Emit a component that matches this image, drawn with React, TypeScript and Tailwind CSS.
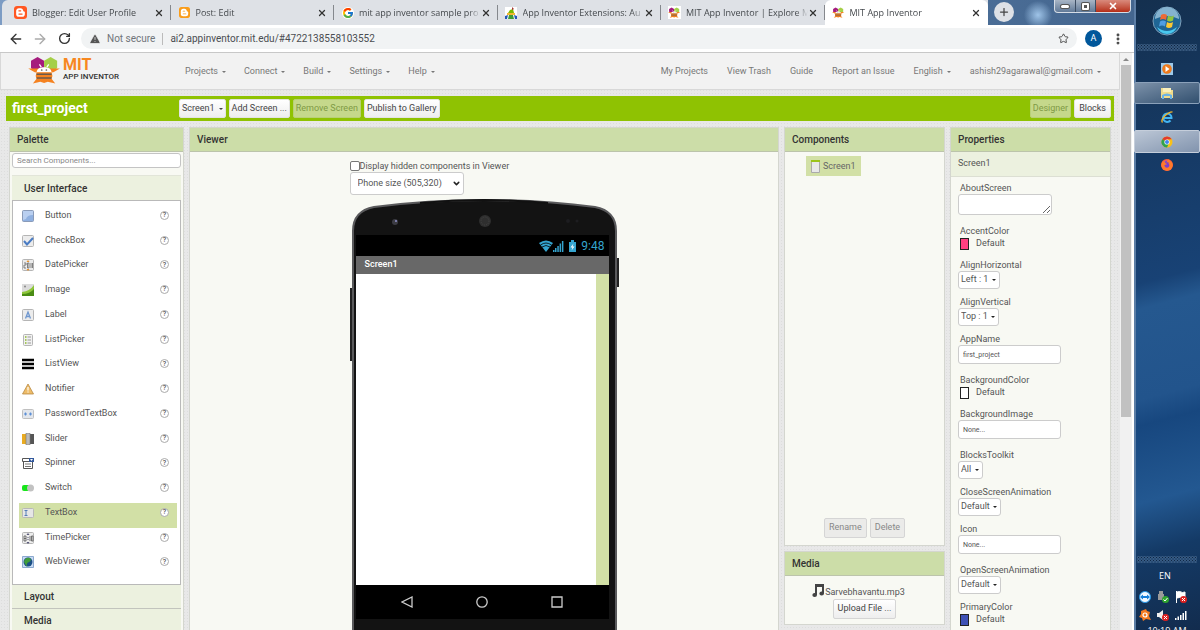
import type { ReactNode } from "react";
import { ArrowLeft, ArrowRight, ChevronDown, EllipsisVertical, Plus, RotateCw, Star, TriangleAlert, X } from "lucide-react";
import { FaFirefoxBrowser } from "react-icons/fa";
import { FcGoogle } from "react-icons/fc";
import { SiBlogger } from "react-icons/si";

function Bee({ className }: { className?: string }) {
  return (
    <svg viewBox="0 0 36 30" className={className} aria-hidden="true">
      <path d="M3 5 10 1l7 4v8l-7 4-7-4z" fill="#a51c7d" />
      <path d="M17 5l7-4 7 4v8l-7 4-7-4z" fill="#a5cf47" />
      <path d="M0 13.500h11l2 2h8l2-2h11l-7 4-9 1H15l-8-1z" fill="#f58220" />
      <path d="M9 18c0-5 4-6 8-6s8 1 8 6z" fill="#fff" />
      <path d="M14 12l-2-3M20 12l2-3" stroke="#fff" strokeWidth="1.4" />
      <circle cx="14.500" cy="15" r="0.900" fill="#666" />
      <circle cx="19.500" cy="15" r="0.900" fill="#666" />
      <path d="M9 17.500h16l1 4-1 3 4 5-8-2-4 1.500-4-1.500-8 2 4-5-1-3z" fill="#f58220" />
      <path d="M9 19.500h16M9 23.500h16" stroke="#6b5a4c" strokeWidth="1.500" />
    </svg>
  );
}

function ExtensionIcon() {
  return (
    <svg viewBox="0 0 12 12" className="size-3" aria-hidden="true">
      <path fill="#fff" d="M0 0h12v12H0z" />
      <path d="M2 6h8v2H2z" fill="#f2b632" />
      <path d="M3 6l2-3 3-1 1 4z" fill="#7ab800" />
      <path d="M7 0l2 2-2 1z" fill="#a33" />
      <path d="M3 12l1-4h4l1 4z" fill="#3e9c35" />
      <path d="M0 12V9l3-1-1 4zM12 12V9L9 8l1 4z" fill="#2456b8" />
    </svg>
  );
}

const tabs: { title: string; icon: ReactNode }[] = [
  { title: "Blogger: Edit User Profile", icon: <SiBlogger className="size-[13px] rounded-[3px] bg-white text-[#ff5722]" /> },
  { title: "Post: Edit", icon: <SiBlogger className="size-[11px] rounded-[2px] bg-white text-[#f99d1c]" /> },
  { title: "mit app inventor sample pro", icon: <FcGoogle className="size-3 rounded-full bg-white" /> },
  { title: "App Inventor Extensions: Au", icon: <ExtensionIcon /> },
  { title: "MIT App Inventor | Explore M", icon: <Bee className="size-[13px] bg-white" /> },
  { title: "MIT App Inventor", icon: <Bee className="size-[13px]" /> },
];

function TabStrip() {
  return (
    <div className="flex h-[25px] shrink-0 bg-linear-to-r from-[#7d9cc4] via-[#5b7fa8] to-[#44668f] pl-[2px]">
      <div className="grid max-w-[987px] min-w-0 flex-1 grid-cols-6 rounded-tl-md bg-[#dee1e6] pl-[5px]">
        {tabs.map((tab, i) => {
          const active = i === tabs.length - 1;
          return (
            <div
              key={i}
              className={`flex min-w-0 items-center pl-[7px] ${active ? "rounded-t-md bg-white pr-[7px]" : ""}`}
            >
              <span className="flex w-[13px] shrink-0 justify-center">{tab.icon}</span>
              <span className="ml-[5px] min-w-0 flex-1 overflow-hidden mask-r-from-90% text-[9px] whitespace-nowrap text-[#45494d]">
                {tab.title}
              </span>
              <button type="button" aria-label={`Close ${tab.title}`} className="text-[#333]">
                <X className="size-[10px]" strokeWidth={3} />
              </button>
              {!active && <span className="ml-[6px] h-[15px] w-px shrink-0 bg-[#85888d]" />}
            </div>
          );
        })}
      </div>
      <button
        type="button"
        aria-label="New tab"
        className="mt-[2px] ml-[6px] flex size-5 shrink-0 items-center justify-center rounded-full bg-[#dee1e6] text-[#444]"
      >
        <Plus className="size-3" strokeWidth={2.5} />
      </button>
      <div className="ml-auto w-10 bg-[radial-gradient(circle_at_60%_60%,#9fc4e8_0,transparent_50%)]" />
      <div className="mr-[3px] flex h-[13px] shrink-0 overflow-hidden rounded-b-[4px] border border-t-0 border-[#d6dde6] bg-linear-to-b from-[#a9b6c6] to-[#617a98]">
        <button type="button" aria-label="Minimize" className="flex w-[21px] items-center justify-center border-r border-[#3c4d63]">
          <span className="h-[3px] w-2 rounded-sm bg-white ring-1 ring-[#555]" />
        </button>
        <button type="button" aria-label="Restore" className="flex w-5 items-center justify-center border-r border-[#3c4d63]">
          <span className="size-[7px] rounded-[1px] border-2 border-white bg-[#555] ring-1 ring-[#555]" />
        </button>
        <button type="button" aria-label="Close window" className="flex w-[34px] items-center justify-center bg-linear-to-b from-[#d98a7c] to-[#b52b14] text-white">
          <X className="size-[10px]" strokeWidth={4} />
        </button>
      </div>
    </div>
  );
}

function AddressBar() {
  return (
    <div className="flex h-7 shrink-0 items-center border-b border-[#c8c8c8] bg-white pr-[9px] pl-2 font-['Roboto',sans-serif] text-[10px]">
      <button type="button" aria-label="Back" className="text-[#333]">
        <ArrowLeft className="size-4" />
      </button>
      <button type="button" aria-label="Forward" className="ml-2 text-[#aaa]">
        <ArrowRight className="size-4" />
      </button>
      <button type="button" aria-label="Reload" className="ml-[10px] text-[#333]">
        <RotateCw className="size-[13px]" strokeWidth={2.5} />
      </button>
      <div className="ml-[10px] flex h-[21px] flex-1 items-center rounded-full bg-[#f1f3f4] px-2">
        <TriangleAlert className="size-3 fill-[#555] text-[#f1f3f4]" strokeWidth={1.5} />
        <span className="ml-[6px] whitespace-nowrap text-[#70757a]">Not secure</span>
        <span className="mx-[7px] h-3 w-px bg-[#bbb]" />
        <input
          aria-label="Address"
          defaultValue="ai2.appinventor.mit.edu/#4722138558103552"
          className="min-w-0 flex-1 bg-transparent text-[#4a4d51] outline-none"
        />
        <button type="button" aria-label="Bookmark" className="text-[#444]">
          <Star className="size-[11px]" />
        </button>
      </div>
      <span className="ml-2 flex size-[17px] items-center justify-center rounded-full bg-[#01579b] text-[9px] text-white">A</span>
      <button type="button" aria-label="Browser menu" className="ml-[9px] text-[#444]">
        <EllipsisVertical className="size-[14px]" strokeWidth={3} />
      </button>
    </div>
  );
}

function Caret() {
  return <span className="inline-block border-x-2 border-t-2 border-x-transparent border-t-current" aria-hidden="true" />;
}

const menus = ["Projects", "Connect", "Build", "Settings", "Help"];

const accountLinks = [
  { label: "My Projects" },
  { label: "View Trash" },
  { label: "Guide" },
  { label: "Report an Issue" },
  { label: "English", menu: true },
  { label: "ashish29agarawal@gmail.com", menu: true },
];

function SiteHeader() {
  return (
    <header className="flex h-[37px] shrink-0 items-center border border-t-0 border-[#d8d8d8] bg-[#f2f2f2] pr-[18px] pl-[26px] text-[#777]">
      <a href="#home" className="flex w-[158px] items-center pb-[3px]" aria-label="MIT App Inventor">
        <Bee className="h-7 w-9" />
        <span className="flex flex-col">
          <span className="text-[16px] leading-[14px] font-bold text-[#f7871f]">MIT</span>
          <span className="text-[8px] leading-[9px] font-medium whitespace-nowrap text-[#333]">APP INVENTOR</span>
        </span>
      </a>
      <nav className="flex gap-[18px] pt-[2px]" aria-label="Main menu">
        {menus.map((menu) => (
          <button key={menu} type="button" aria-haspopup="menu" className="flex items-center gap-1">
            {menu}
            <Caret />
          </button>
        ))}
      </nav>
      <nav className="ml-auto flex gap-[19px] pt-[2px]" aria-label="Account">
        {accountLinks.map((link) =>
          link.menu ? (
            <button key={link.label} type="button" aria-haspopup="menu" className="flex items-center gap-1">
              {link.label}
              <Caret />
            </button>
          ) : (
            <a key={link.label} href="#account">
              {link.label}
            </a>
          ),
        )}
      </nav>
    </header>
  );
}

function BarButton({ children, disabled }: { children: ReactNode; disabled?: boolean }) {
  return (
    <button
      type="button"
      disabled={disabled}
      className={`flex h-[19px] items-center gap-1 rounded-[2px] border px-[2px] whitespace-nowrap ${
        disabled ? "border-[#b9d077] bg-[#c5d88b] text-[#7f9a45]" : "border-[#e4e4e4] bg-linear-to-b from-white to-[#eee] text-[#444]"
      }`}
    >
      {children}
    </button>
  );
}

function ProjectBar() {
  return (
    <div className="mx-[6px] mt-[6px] flex h-[25px] shrink-0 items-center gap-[3px] bg-[#8fc202] pr-[3px] pl-[6px]">
      <h1 className="w-[164px] text-[14px] font-bold text-white">first_project</h1>
      <BarButton>
        Screen1 <Caret />
      </BarButton>
      <BarButton>Add Screen ...</BarButton>
      <BarButton disabled>Remove Screen</BarButton>
      <BarButton>Publish to Gallery</BarButton>
      <div className="ml-auto flex gap-[3px]">
        <BarButton disabled>Designer</BarButton>
        <BarButton>
          <span className="px-[2px]">Blocks</span>
        </BarButton>
      </div>
    </div>
  );
}

function Panel({ title, className, children }: { title: string; className?: string; children: ReactNode }) {
  return (
    <section className={`flex flex-col border border-[#d4d6cf] bg-[#f8f9f3] ${className ?? ""}`}>
      <h2 className="flex h-6 shrink-0 items-center border-b border-[#bcc4ab] bg-[#ccdda8] px-[7px] text-[10px] font-medium text-[#333]">
        {title}
      </h2>
      {children}
    </section>
  );
}

const plate = <rect x="0.500" y="0.500" width="11" height="11" rx="1" fill="#ececec" stroke="#b5b5b5" />;

const paletteItems: { name: string; art: ReactNode }[] = [
  {
    name: "Button",
    art: (
      <>
        <rect x="0.500" y="0.500" width="11" height="11" rx="1" fill="#8fb0e0" stroke="#8a9bb8" />
        <path d="M1 1h10v4Q5 5 4 9L1 10z" fill="#b9cff0" />
      </>
    ),
  },
  { name: "CheckBox", art: <>{plate}<path d="M2 6l3 3.500L11 3" fill="none" stroke="#4a7cc4" strokeWidth="2" /></> },
  {
    name: "DatePicker",
    art: <>{plate}<path d="M2 4h2v2H2v3h2M5.500 4h1.500v5H5.500zM9 4v5M10.500 4v5" fill="none" stroke="#666" strokeWidth="0.800" /><path d="M4.500 3L6 1l1.500 2zM4.500 10L6 12l1.500-2z" fill="#e8902c" /></>,
  },
  {
    name: "Image",
    art: <><path d="M0 0h12v12H0z" fill="#dcdcdc" /><circle cx="3" cy="2.500" r="1" fill="#888" /><path d="M0 8Q8 7 12 1v11H0z" fill="#8ec63a" /><path d="M0 10q8 0 12-5v7H0z" fill="#4a8c14" /></>,
  },
  { name: "Label", art: <>{plate}<path d="M3.500 9.500L6 3l2.500 6.500M4.500 7.500h3" fill="none" stroke="#6f97cf" strokeWidth="1.300" /></> },
  {
    name: "ListPicker",
    art: <><rect x="1.500" y="0.500" width="9" height="11" rx="1" fill="#f1f1f1" stroke="#b5b5b5" /><path d="M3 3h1.500M3 6h1.500M3 9h1.500" stroke="#8cb92c" strokeWidth="1.500" /><path d="M5.500 3H9M5.500 6H9M5.500 9H9" stroke="#999" /></>,
  },
  { name: "ListView", art: <path d="M0 2h12M0 6h12M0 10h12" stroke="#000" strokeWidth="2.400" /> },
  { name: "Notifier", art: <><path d="M6 1l5.500 10H.5z" fill="#eebc68" stroke="#b98a45" strokeWidth="0.800" /><path d="M6 4v3.500M6 8.500v1" stroke="#fff" strokeWidth="1.200" /></> },
  {
    name: "PasswordTextBox",
    art: <><rect x="0.500" y="1.500" width="11" height="9" rx="1" fill="#e2e6ec" stroke="#c0c0c0" /><path d="M2 6h3M3.500 4.500v3M7 6h3M8.500 4.500v3" stroke="#5c8fd6" strokeWidth="1.200" /></>,
  },
  { name: "Slider", art: <><path d="M0 1h4v10H0z" fill="#e9ab22" /><path d="M8 1h4v10H8z" fill="#555" /><path d="M4 0h4v12H4z" fill="#bbb" stroke="#777" strokeWidth="0.600" /></> },
  {
    name: "Spinner",
    art: <><path d="M.5 1.500h11v3H.5zM1.500 4.500h9v7h-9z" fill="#fff" stroke="#555" /><path d="M7 1h5v4H7z" fill="#31589c" /><path d="M8 2h3L9.500 4z" fill="#fff" /><path d="M3 7h6M3 9.500h6" stroke="#777" /></>,
  },
  { name: "Switch", art: <><rect y="3" width="9" height="6" rx="2" fill="#17e51b" /><circle cx="8.500" cy="6" r="3.500" fill="#c2c2c2" /></> },
  { name: "TextBox", art: <><rect x="0.500" y="1.500" width="11" height="9" rx="1" fill="#e6e6e6" stroke="#b8b8b8" /><path d="M2.500 3.500h3M2.500 8.500h3M4 3.500v5" stroke="#557eb8" /></> },
  {
    name: "TimePicker",
    art: <>{plate}<path d="M2 4h2v5H2zM2 6.500h2M8 4v5M9.500 4h1.500v5H9.500z" fill="none" stroke="#555" strokeWidth="0.800" /><path d="M4.500 3L6 1l1.500 2zM4.500 10L6 12l1.500-2zM5.500 5h1v1h-1zM5.500 7h1v1h-1z" fill="#557" /></>,
  },
  { name: "WebViewer", art: <><path d="M.5.500h11v11H.5z" fill="#c9dcf4" stroke="#8ba8cf" /><circle cx="6" cy="6" r="4.500" fill="#1b4f86" /><path d="M2 6q1-5 6-4 2 3-1 4t-2 4-3-4z" fill="#3f9c3a" /></> },
];

function Palette() {
  return (
    <Panel title="Palette" className="w-[175px] shrink-0">
      <div className="flex flex-col px-[2px] pt-[1px]">
        <input
          type="search"
          aria-label="Search components"
          placeholder="Search Components..."
          className="h-[15px] rounded-[3px] border border-[#c4c4c4] bg-white px-[4px] text-[8px] placeholder:text-[#888]"
        />
        <button type="button" aria-expanded="true" className="mt-[7px] h-[25px] border-t border-[#e2e5d9] bg-[#ecf1df] px-3 text-left text-[10px] font-medium text-[#333]">
          User Interface
        </button>
        <div className="border border-[#b9b9b9] bg-white pt-[5px] pr-[3px] pb-[7px] pl-[6px]">
          <ul className="grid h-[371px] auto-rows-fr">
            {paletteItems.map((item) => (
              <li
                key={item.name}
                className={`flex items-start justify-between pr-2 pl-[3px] ${item.name === "TextBox" ? "bg-[#d2e0a6]" : ""}`}
              >
                <span className="flex items-start gap-[11px]">
                  <svg viewBox="0 0 12 12" className="mt-1 size-3" aria-hidden="true">
                    {item.art}
                  </svg>
                  <span className="pt-[3px] leading-3 text-[#555]">{item.name}</span>
                </span>
                <button
                  type="button"
                  aria-label={`About ${item.name}`}
                  className="mt-[5px] flex size-[9px] items-center justify-center rounded-full border border-[#aaa] bg-white text-[7px] font-medium text-[#555]"
                >
                  ?
                </button>
              </li>
            ))}
          </ul>
        </div>
        {["Layout", "Media"].map((name) => (
          <button key={name} type="button" aria-expanded="false" className="h-6 border-b border-[#c2c4bd] bg-[#ecf1df] px-3 text-left text-[10px] font-medium text-[#333]">
            {name}
          </button>
        ))}
      </div>
    </Panel>
  );
}

function Phone() {
  return (
    <div className="relative mt-1 h-[470px] pt-9 pr-[10px] pl-[6px]">
      <svg viewBox="0 0 269 470" className="absolute inset-0 h-full w-full" aria-hidden="true">
        <path d="M0 89h3v73H0zM266 59h3v29h-3z" fill="#222" />
        <path d="M3 480V32Q3 12 24 8 78 1 134 1t111 7q21 4 21 24v448z" fill="#131313" stroke="#5a5a5c" strokeWidth="2" />
        <path d="M70 4Q102 1 134 1t64 3" fill="none" stroke="#111" strokeWidth="2" />
        <circle cx="45" cy="23" r="3" fill="#3b3b42" />
        <circle cx="46" cy="22" r="1" fill="#8f90c8" />
        <circle cx="135" cy="22" r="6" fill="#2f2f2f" />
        <circle cx="135" cy="22" r="4" fill="none" stroke="#444" strokeDasharray="1 1" />
        <circle cx="218" cy="22" r="2" fill="#1d1d20" />
        <circle cx="227" cy="22" r="1.500" fill="#1d1d20" />
      </svg>
      <div className="relative">
        <div className="flex h-[21px] items-center justify-end gap-[4px] bg-black pr-[4px] text-[12px] text-[#35a4cf]">
          <svg viewBox="0 0 38 12" className="h-3 w-[38px]" fill="currentColor" aria-hidden="true">
            <path d="M0 3Q7-2 14 3L7 12z" />
            <path d="M1.500 5Q7 1 12.500 5M3 7Q7 4 11 7" fill="none" stroke="#000" strokeWidth="0.800" />
            <path d="M14 12v-2h1.500v2zM16 12V8h1.500v4zM18.300 12V6h1.500v6zM20.600 12V3.500h1.500V12zM22.900 12V1h1.500v11z" />
            <path d="M30 2h2V0h3v2h2v10h-7z" />
            <path d="M34.500 3.500L31.500 7.500h2l-1 3 3-4h-2z" fill="#fff" />
          </svg>
          9:48
        </div>
        <div className="flex h-[18px] items-center bg-[#686868] px-[9px] font-medium text-white">Screen1</div>
        <div className="h-[311px] border-r-[13px] border-[#d2e0a6] bg-white" />
        <div className="flex h-[34px] items-center justify-center gap-[63px] bg-black">
          <svg viewBox="0 0 12 12" className="size-3" fill="none" stroke="#ccc" strokeWidth="1.300" aria-hidden="true">
            <path d="M11 1v10L1 6z" />
          </svg>
          <svg viewBox="0 0 12 12" className="size-3" fill="none" stroke="#ccc" strokeWidth="1.300" aria-hidden="true">
            <circle cx="6" cy="6" r="5.200" />
          </svg>
          <svg viewBox="0 0 12 12" className="size-3" fill="none" stroke="#ccc" strokeWidth="1.300" aria-hidden="true">
            <path d="M1 1h10v10H1z" />
          </svg>
        </div>
      </div>
    </div>
  );
}

function Viewer() {
  return (
    <Panel title="Viewer" className="min-w-0 flex-1">
      <div className="mx-auto w-[269px] pt-2">
        <label className="flex h-3 items-center leading-3 text-[#555]">
          <input type="checkbox" className="size-[10px] appearance-none rounded-[2px] border border-[#777] bg-white" />
          Display hidden components in Viewer
        </label>
        <div className="relative w-[114px]">
          <select aria-label="Screen size" className="h-[23px] w-full appearance-none rounded-[3px] border border-[#ccc] bg-white px-[7px] text-[#555]">
            <option>Phone size (505,320)</option>
          </select>
          <ChevronDown className="pointer-events-none absolute top-[7px] right-[3px] size-[9px] text-[#222]" strokeWidth={4} />
        </div>
        <Phone />
      </div>
    </Panel>
  );
}

function SmallButton({ children, disabled }: { children: ReactNode; disabled?: boolean }) {
  return (
    <button
      type="button"
      disabled={disabled}
      className={`h-5 rounded-[2px] border border-[#d5d5d5] px-1 ${disabled ? "bg-[#ebebe9] text-[#888]" : "bg-linear-to-b from-white to-[#eee] text-[#444]"}`}
    >
      {children}
    </button>
  );
}

function SideColumn() {
  return (
    <div className="flex w-[161px] shrink-0 flex-col gap-[5px]">
      <Panel title="Components" className="h-[419px]">
        <div className="flex px-[21px] pt-1">
          <button type="button" className="flex h-5 items-center gap-[3px] bg-[#d2e0a6] px-[5px] text-[#666]">
            <svg viewBox="0 0 9 13" className="h-[13px] w-[9px]" aria-hidden="true">
              <path d="M.5.500h8v12h-8z" fill="#e8e8e8" stroke="#aaa" />
              <path d="M0 0h9v2H0z" fill="#9bc31c" />
            </svg>
            <span className="pt-[2px]">Screen1</span>
          </button>
        </div>
        <div className="mt-auto mb-[7px] flex justify-center gap-[3px]">
          <SmallButton disabled>Rename</SmallButton>
          <SmallButton disabled>Delete</SmallButton>
        </div>
      </Panel>
      <Panel title="Media">
        <div className="flex flex-col items-center pt-[6px] pb-[5px]">
          <a href="#media" className="mb-px flex items-center gap-px pr-3 text-[#555]">
            <svg viewBox="0 0 12 13" className="h-[13px] w-3" fill="#444" aria-hidden="true">
              <path d="M3 0h9v9.500a2.300 2 0 1 1-2-2V3H5v8a2.300 2 0 1 1-2-2z" />
            </svg>
            <span className="pt-1 leading-3">Sarvebhavantu.mp3</span>
          </a>
          <SmallButton>Upload File ...</SmallButton>
        </div>
      </Panel>
    </div>
  );
}

type Property = { name: string; kind: "area" | "color" | "select" | "text"; value: string };

const properties: Property[] = [
  { name: "AboutScreen", kind: "area", value: "" },
  { name: "AccentColor", kind: "color", value: "#ff4081" },
  { name: "AlignHorizontal", kind: "select", value: "Left : 1" },
  { name: "AlignVertical", kind: "select", value: "Top : 1" },
  { name: "AppName", kind: "text", value: "first_project" },
  { name: "BackgroundColor", kind: "color", value: "#ffffff" },
  { name: "BackgroundImage", kind: "text", value: "None..." },
  { name: "BlocksToolkit", kind: "select", value: "All" },
  { name: "CloseScreenAnimation", kind: "select", value: "Default" },
  { name: "Icon", kind: "text", value: "None..." },
  { name: "OpenScreenAnimation", kind: "select", value: "Default" },
  { name: "PrimaryColor", kind: "color", value: "#3f51b5" },
];

function PropertyEditor({ name, kind, value }: Property) {
  if (kind === "area") {
    return <textarea id={name} defaultValue={value} className="mb-[10px] block h-[21px] w-[94px] resize rounded-[3px] border border-[#ccc] bg-white" />;
  }
  if (kind === "color") {
    return (
      <button id={name} type="button" className="mb-2 flex h-[14px] items-center gap-[7px] pl-[2px]">
        <span className="h-3 w-[9px] border border-[#222]" style={{ backgroundColor: value }} />
        Default
      </button>
    );
  }
  if (kind === "select") {
    return (
      <div className="relative mb-[7px] w-fit">
        <select id={name} className="block h-[18px] appearance-none rounded-[3px] border border-[#ccc] bg-white pr-[10px] pl-[2px]">
          <option>{value}</option>
        </select>
        <span className="pointer-events-none absolute top-[8px] right-[4px] flex text-[#222]">
          <Caret />
        </span>
      </div>
    );
  }
  return <input id={name} defaultValue={value} className="mb-[10px] block h-[19px] w-[103px] rounded-[3px] border border-[#ccc] bg-white px-1 text-[7px]" />;
}

function Properties() {
  return (
    <Panel title="Properties" className="w-[161px] shrink-0">
      <div className="flex h-[25px] shrink-0 items-center border-b border-[#dcdfd3] bg-[#ecf1df] px-[7px] text-[#555]">Screen1</div>
      <div className="px-[7px] pt-[5px] pb-2 text-[#555]">
        {properties.map((property) => (
          <div key={property.name}>
            <label htmlFor={property.name} className="block pl-[2px] leading-3">
              {property.name}
            </label>
            <PropertyEditor {...property} />
          </div>
        ))}
      </div>
    </Panel>
  );
}

function Scrollbar() {
  return (
    <div className="flex w-[14px] shrink-0 flex-col items-center border-r-2 border-white bg-[#f1f1f1] pt-[5px]" aria-hidden="true">
      <span className="border-x-[3px] border-b-[3px] border-x-transparent border-b-[#888]" />
      <span className="mt-1 h-[352px] w-[10px] bg-[#c1c1c1]" />
    </div>
  );
}

function Grip() {
  return <div className="h-[7px] w-[60px] bg-[radial-gradient(circle,#0a1a30_1px,#4f7197_1px,transparent_2px)] bg-size-[3px_3px] opacity-60" aria-hidden="true" />;
}

function Taskbar() {
  return (
    <aside className="flex w-[66px] shrink-0 flex-col items-center bg-linear-[165deg,#14304f_0%,#163a65_25%,#184275_44%,#25588f_48%,#22548c_62%,#17477f_66%,#235891_78%,#143a66_86%,#122c4e_100%] text-white inset-shadow-[2px_0_#5c7ea6]">
      <button type="button" aria-label="Start" className="mt-[6px]">
        <svg viewBox="0 0 30 30" className="size-[30px]">
          <circle cx="15" cy="15" r="14" fill="#1f6695" stroke="#7e9fb9" />
          <path d="M3 13A12 12 0 0 1 27 13Q15 7 3 13z" fill="#85b3d0" />
          <path d="M5 21Q15 29 25 21 22 28 15 28T5 21z" fill="#49c8ef" />
          <path d="M9 9q3-2 6 0l-1 5q-3-2-6 0z" fill="#ee6a35" />
          <path d="M16 9.500q3 2 6 0l-1 5q-3 2-6 0z" fill="#91c640" />
          <path d="M8 15.500q3-2 6 0l-1 5q-3-2-6 0z" fill="#4f9ee3" />
          <path d="M15 16q3 2 6 0l-1 5q-3 2-6 0z" fill="#fbc834" />
        </svg>
      </button>
      <div className="mt-2">
        <Grip />
      </div>
      <button type="button" aria-label="Media Player" className="mt-3">
        <svg viewBox="0 0 12 12" className="size-3">
          <path d="M0 0h12v12H0z" fill="#9cc9ea" />
          <circle cx="6" cy="6" r="4.800" fill="#ee7a1c" />
          <path d="M4.500 3l4 3-4 3z" fill="#fff" />
        </svg>
      </button>
      <button type="button" aria-label="Explorer" className="mt-[7px] flex h-[22px] w-full items-center justify-center rounded-[2px] border border-[#8ba1ba] bg-linear-to-br from-[#7d92aa] to-[#32506f]">
        <svg viewBox="0 0 14 12" className="h-3 w-[14px]">
          <path d="M1 1h5l1 2h6v8H1z" fill="#f0dc8c" />
          <path d="M3 1h8v4H3z" fill="#faf0bd" />
          <path d="M2 12V8q5-3 10 0v4h-2V9H4v3z" fill="#6bb3e6" />
        </svg>
      </button>
      <button type="button" aria-label="Internet Explorer" className="mt-[7px]">
        <svg viewBox="0 0 12 12" className="size-3" fill="none">
          <path d="M3 7h7.500A4.200 4.200 0 1 0 9.500 9.500" stroke="#43b5f3" strokeWidth="2" />
          <path d="M1.500 11.500C-1 9 6 1 11.500.8" stroke="#f0b52c" strokeWidth="1.300" />
        </svg>
      </button>
      <button type="button" aria-label="Chrome" className="mt-[7px] flex h-[23px] w-full items-center justify-center rounded-[2px] border border-[#c5cedb] bg-linear-to-br from-[#bcc7d6] to-[#8294ae]">
        <svg viewBox="0 0 12 12" className="size-3">
          <circle cx="6" cy="6" r="5.500" fill="#fbc116" />
          <path d="M6 6L1.200 3.200A5.500 5.500 0 0 1 10.800 3.200L6 3.500z" fill="#e33b2e" />
          <path d="M1.200 3.200A5.500 5.500 0 0 0 6 11.500L8 7 6 6z" fill="#30a350" />
          <circle cx="6" cy="6" r="2.600" fill="#fff" />
          <circle cx="6" cy="6" r="2" fill="#4284f3" />
        </svg>
      </button>
      <button type="button" aria-label="Firefox" className="mt-[6px] text-[#ff7a2b]">
        <FaFirefoxBrowser className="size-3 rounded-full bg-radial from-[#7a3fd0] from-40% to-[#ff5a3a] to-60%" />
      </button>
      <div className="mt-auto">
        <Grip />
      </div>
      <span className="mt-[7px] mr-1 text-[9px] leading-3">EN</span>
      <div className="mt-[9px] mr-2 grid grid-cols-3 gap-[6px]" aria-label="Notification area">
        <svg viewBox="0 0 12 12" className="size-3">
          <circle cx="6" cy="6" r="5.500" fill="#f4f9ff" stroke="#2196e8" />
          <path d="M1 6l3-2.500v1.500h4V3.500L11 6 8 8.500V7H4v1.500z" fill="#157fda" />
        </svg>
        <svg viewBox="0 0 12 12" className="size-3">
          <path d="M2 0h4v3h1v6H1V3h1z" fill="#999" />
          <circle cx="8.500" cy="8.500" r="3.500" fill="#2ea52e" />
          <path d="M6.500 8.500l1.500 1.500 2.500-3" stroke="#fff" fill="none" />
        </svg>
        <svg viewBox="0 0 12 12" className="size-3">
          <path d="M1.500 0v12M2 1q3-1 4 0t4 0v6q-3 1-4 0T2 7z" fill="#fff" stroke="#fff" />
          <circle cx="8.500" cy="8.500" r="3.500" fill="#d22" />
          <path d="M7 7l3 3M10 7l-3 3" stroke="#fff" />
        </svg>
        <svg viewBox="0 0 12 12" className="size-3">
          <path d="M2 2l5-2 1 2 3 1-1 4 2 4-5-1-3 2-1-3-3-1 2-3z" fill="#f47b20" />
          <circle cx="6" cy="6" r="2" fill="none" stroke="#fff" strokeWidth="1.200" />
        </svg>
        <svg viewBox="0 0 12 12" className="size-3">
          <path d="M0 4h2l4-3v10L2 8H0z" fill="#eee" />
          <circle cx="8.500" cy="8.500" r="3.500" fill="#d22" />
          <path d="M7 7l3 3M10 7l-3 3" stroke="#fff" />
        </svg>
        <svg viewBox="0 0 12 12" className="size-3" fill="#fff">
          <path d="M0 11V9h1.500v2zM2.500 11V7.500H4V11zM5 11V6h1.500v5zM7.500 11V4H9v7zM10 11V2h1.500v9z" />
        </svg>
      </div>
      <span className="-mb-[7px] mt-[4px] text-[9px] leading-3 whitespace-nowrap">10:19 AM</span>
    </aside>
  );
}

export default function App() {
  return (
    <div className="flex h-screen overflow-hidden font-['Open_Sans','Noto_Sans',sans-serif]">
      <div className="flex min-w-0 flex-1 flex-col">
        <TabStrip />
        <AddressBar />
        <div className="flex min-h-0 flex-1 font-['Roboto',sans-serif] text-[9px]">
          <main className="flex min-w-0 flex-1 flex-col overflow-hidden bg-[#e8e8e8] bg-[radial-gradient(#dddddd_1px,transparent_1px)] bg-size-[3px_3px]">
            <SiteHeader />
            <ProjectBar />
            <div className="mx-[9px] mt-[6px] flex shrink-0 items-start gap-[5px]">
              <Palette />
              <Viewer />
              <SideColumn />
              <Properties />
            </div>
          </main>
          <Scrollbar />
        </div>
      </div>
      <Taskbar />
    </div>
  );
}
